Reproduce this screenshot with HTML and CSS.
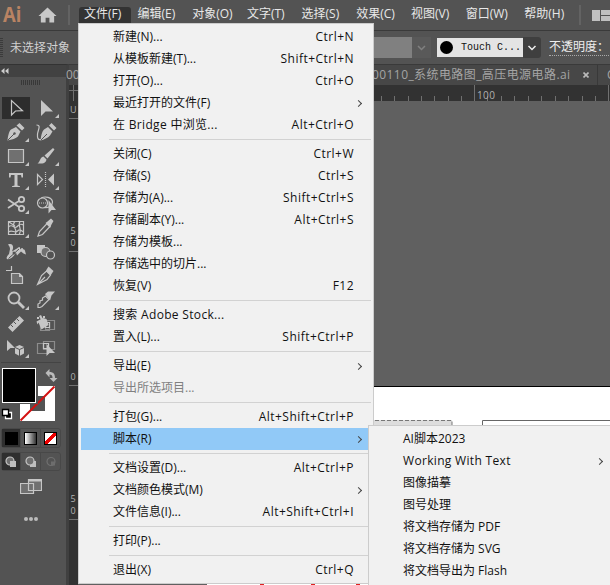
FILE: index.html
```html
<!DOCTYPE html>
<html lang="zh-CN">
<head>
<meta charset="utf-8">
<title>Ai</title>
<link rel="stylesheet" href="styles.css">
</head>
<body>
<div class="app">
  <header class="menubar">
    <span class="logo">Ai</span>
    <svg class="home" viewBox="0 0 20 18"><path d="M10 1 0.5 10H3v7h5v-5h4v5h5v-7h2.5z"/></svg>
    <i class="divider"></i>
    <nav class="menus">
      <span class="menu open">文件(F)</span><span class="menu">编辑(E)</span><span class="menu">对象(O)</span><span class="menu">文字(T)</span><span class="menu">选择(S)</span><span class="menu">效果(C)</span><span class="menu">视图(V)</span><span class="menu">窗口(W)</span><span class="menu last">帮助(H)</span>
    </nav>
    <i class="divider"></i>
    <svg class="workspace" viewBox="0 0 18 11"><path d="M0 0h8v11H0zM9 0h9v5H9zM9 6h9v5H9z"/></svg>
  </header>

  <div class="controls">
    <i class="grip"></i>
    <span class="status">未选择对象</span>
    <span class="field"></span>
    <svg class="drop" viewBox="0 0 19 19"><path d="M6 8l3.5 3.5L13 8"/></svg>
    <span class="brush"><i class="dot"></i>Touch C...</span>
    <svg class="drop live" viewBox="0 0 18 21"><path d="M5.500 9l3.500 3.500L12.500 9"/></svg>
    <span class="opacity">不透明度：</span>
  </div>

  <div class="work">
    <aside class="toolbar">
      <div class="collapse"><svg viewBox="0 0 8 6"><path d="M3.500 0v6L0 3zM7.500 0v6L4 3z"/></svg></div>
      <div class="handle"><i></i></div>
      <div class="tools">
        <svg class="tool active" viewBox="0 0 30 24"><path class="l" d="M10.500 4.500v14.500l4-4 7-.3z"/></svg>
        <svg class="tool" viewBox="0 0 30 24"><path d="M10 4v16l4.500-4.500H22zM28 18v4h-4z"/></svg>

        <svg class="tool" viewBox="0 0 30 24"><path d="M6.500 20.500C7 16 8 11 10 9.500l5-2.500 4.500 4.500-2.500 5c-2 2-6 3-10.500 4zM15.500 5.500l3-2.500 5 5L21 10.500z"/><path class="d" d="M7 20l6.500-6.500"/><circle class="dk" cx="13.500" cy="13.500" r="1.200"/><path d="M28 18v4h-4z"/></svg>
        <svg class="tool" viewBox="0 0 30 24"><path d="M9.500 20.500c.5-5 1.500-9 3.500-11l4-2.500 4.500 4.500-2.500 4c-2 2.500-6 4-9.500 5zM18 5.500l2.500-2.500 5 5-2.500 2.500z"/><path class="d" d="M10 20l6-6"/><path class="l" d="M5.500 5c5 0 1.500 5 1 9-.3 4 .5 6.500 3.500 5.500"/></svg>

        <svg class="tool" viewBox="0 0 30 24"><path class="l fill" d="M7.500 5.500h15v13h-15z"/><path d="M28 18v4h-4z"/></svg>
        <svg class="tool" viewBox="0 0 30 24"><path d="M22 4l1.500 1.500-7 9-3-3zM12.500 12.500l3 3c-1 5-6 4-9 4 3-2 2-6 6-7zM28 18v4h-4z"/></svg>

        <svg class="tool" viewBox="0 0 30 24"><path d="M8 5h14v4.500h-1.500L20 7h-3.500v10.500l2.500.7V19h-8v-.8l2.500-.7V7H10l-.5 2.500H8zM28 18v4h-4z"/></svg>
        <svg class="tool" viewBox="0 0 30 24"><path class="l" d="M6.500 6.500v10l5-5z"/><path d="M23 5.500v12L17 11.500zM28 18v4h-4z"/><path class="l dots" d="M14.500 4v16"/></svg>

        <svg class="tool" viewBox="0 0 30 24"><g class="l w"><circle cx="20.500" cy="7.500" r="2.700"/><circle cx="20.500" cy="16.500" r="2.700"/><path d="M7 7.500l11 7.500M7 16l11-7"/></g><path d="M28 18v4h-4z"/></svg>
        <svg class="tool" viewBox="0 0 30 24"><circle class="l" cx="11.500" cy="11" r="5"/><path class="l" d="M10 6c4-2 11-1 11.500 4 0 4-4 6-8 5.500"/><path class="l dots" d="M8 11h9"/><path d="M17.500 8v13.500l3-3.500H25z"/></svg>

        <svg class="tool" viewBox="0 0 30 24"><path class="l" d="M7.500 5.500h15v13h-15zM7.500 11c4-4 5 2 8 0s3-4 7-2M7.500 16c4-3 6 2 9-1 2-2 3-1 6 1M14 5.500c-5 4 4 8 0 13M19 5.500c-3 4 3 8-1 13M8 6l6 4"/><path d="M28 18v4h-4z"/></svg>
        <svg class="tool" viewBox="0 0 30 24"><path class="l" d="M7 20l1.500-4.500 7.500-8 3 3-7.500 8z"/><path d="M14.500 7l2-1.500 3.500-3 2.500 2.500-2 3.500L19 12z"/></svg>

        <svg class="tool" viewBox="0 0 30 24"><path d="M7 4.500c4-1.500 5.500 1 5 4l-1 3 4-2.500c2-1 3-3 4-1.500v2c3-3 3-1 3 0 2-1 2 2 3 5l-2.500-1-2.500-2-4 4-1-3c-2 4-6 7.500-9 6.500-1-1 0-3 2-5l1-5c0-2-1-3-2-4.500z"/><path class="d" d="M7.500 18.500L18 9"/><circle class="dk" cx="13" cy="13" r="1.500"/></svg>
        <svg class="tool" viewBox="0 0 30 24"><path d="M6 5h8v8H6z"/><circle class="l mid" cx="14.500" cy="12" r="4.500"/><circle class="l base" cx="19.500" cy="15" r="4"/></svg>

        <svg class="tool" viewBox="0 0 30 24"><path class="l" d="M5 6.500h5.500M10.500 2v5"/><path class="l fill" d="M10.500 9.500h8l3 3v7h-11z"/><path d="M18 9v4h4z"/></svg>
        <svg class="tool" viewBox="0 0 30 24"><path class="l" d="M6.500 20.500l4-9 5-4.500 4 4-3.500 4.500zM7 20l7-7"/><path d="M15 6.500l2.500-4 5 4.500-3 4.500z"/></svg>

        <svg class="tool" viewBox="0 0 30 24"><circle class="l w" cx="13" cy="10" r="5.500"/><path class="l w3" d="M17 14l6 6"/><path d="M28 18v4h-4z"/></svg>
        <svg class="tool" viewBox="0 0 30 24"><path class="l" d="M7 19.500v-3.500l2-1v-2l2.500-1v-2l3-2 3.500 3.500-7 7-2 1z"/><path d="M14 6l3-2.500h7l-3.500 4-1.500 5zM28 18v4h-4z"/></svg>

        <svg class="tool" viewBox="0 0 30 24"><path d="M18.500 4l4.500 4.500L11.500 20 7 15.500z"/><path class="d" d="M16 7l2 2M13 10l2 2M10 13l2 2"/></svg>
        <svg class="tool" viewBox="0 0 30 24"><g class="l dim"><path d="M9.500 10.500h9v8h-9zM14.500 8.500h9v9h-9z"/></g><path class="l" d="M14.500 10.500h4v5h-4z"/><path d="M5.500 9.500L12 6l3.500 1 2 6-7 4.500-3-7-1 2zM8 4l2-1 2 4-2 1z"/><path d="M6 5h2v2H6zM12 4h2v2h-2z"/></svg>

        <svg class="tool" viewBox="0 0 30 24"><path d="M6 4v11l3.500-3H14zM14 11l4.500-2 4.500 2v6.500L18.500 20 14 17.500zM28 18v4h-4z"/><path class="d" d="M14 11.500l4.500 2 4.500-2M18.500 13.500V20"/></svg>
        <svg class="tool" viewBox="0 0 30 24"><g class="l dim"><path d="M6.500 7.500h11v10h-11zM12.500 5.500h11v8h-11z"/></g><path class="l" d="M12.500 7.500h5v5h-5z"/><path d="M15.500 8v12l3-3H24z"/></svg>
      </div>
      <svg class="paint" viewBox="0 0 66 60">
        <path class="rule" d="M1 1.500h60"/>
        <path class="white" d="M20 25h35v35H20z"/><path class="base-fill" d="M30 35h15v15H30z"/>
        <path class="red" d="M20.500 59.500 54.500 25.500"/>
        <path class="base-fill" d="M1 6h37v37H1z"/><path class="white" d="M2 7h34v35H2z"/><path d="M3 8h32v33H3z"/>
        <path class="arrow" d="M45.500 12l4-4v3c4 0 5.500 2 5.500 6h2.500l-4 4-4-4h3c0-3-1-3.500-3-3.500v3z"/>
        <path class="mini" d="M5.500 51.500h6v6h-6z"/><path class="mini inv" d="M2.500 48.500h6v6h-6z"/>
      </svg>
      <div class="swatches">
        <span class="on"><i class="black"></i></span><span><i class="gradient"></i></span><span><i class="none"></i></span>
      </div>
      <div class="swatches modes">
        <span class="on"><svg viewBox="0 0 14 14"><circle class="l mid" cx="6" cy="6" r="4"/><path d="M6 6h6v6H6z"/></svg></span>
        <span><svg viewBox="0 0 14 14"><path d="M6 6h6v6H6z"/><circle class="l mid" cx="6" cy="6" r="4"/></svg></span>
        <span><svg class="off" viewBox="0 0 14 14"><circle class="l" cx="7" cy="6.500" r="4"/><path d="M7 6.500h4v4H7z"/></svg></span>
      </div>
      <svg class="screen" viewBox="0 0 22 16"><path class="l fill" d="M.5 4.500h13v10H.5zM8.500.5h13v11h-13z"/><path d="M8 0h14v2.500H8z"/></svg>
      <div class="more"><i></i><i></i><i></i></div>
    </aside>

    <main class="document">
      <div class="tabs"><span class="tab-start">00</span><span class="tab">00110_系统电路图_高压电源电路.ai</span><svg class="close" viewBox="0 0 6 6"><path d="M.5.5l5 5M5.500.5l-5 5"/></svg><i class="tab-gap"></i><span>C</span></div>
      <div class="ruler">
        <svg viewBox="0 0 541 16"><path d="M0 5.500h9M4.500 0v16M312.500 11v5M325.500 11v5M339.500 11v5M352.500 11v5M365.500 11v5M379.500 11v5M392.500 11v5M405.500 0v16M418.500 11v5M432.500 11v5M445.500 11v5M459.500 11v5M472.500 11v5M486.500 11v5M499.500 11v5M513.500 11v5M526.500 11v5M539.500 0v16"/><text x="408" y="14">100</text></svg>
      </div>
      <div class="stage">
        <svg class="vruler" viewBox="0 0 9 484"><path d="M0 17.500h9M0 150.500h9M0 284.500h9M0 418.500h9"/><text x="1" y="12">U</text><text x="1.500" y="133">5</text><text x="1.500" y="145">0</text><text x="1.500" y="279">0</text><text x="1.500" y="401">5</text><text x="1.500" y="413">0</text></svg>
        <svg class="canvas" viewBox="0 0 532 484"><path class="page" d="M129 285h403v199H129z"/><path class="edge" d="M129 285.500h403"/><path class="shape" d="M129 319h245v12H129z"/><path class="dash" d="M129 319.500h245v12"/><path class="outline" d="M404.500 331v-11.500H532"/><path class="mark" d="M182 483.500h4M233 483.500h4M278 483.500h4"/></svg>
      </div>
    </main>
  </div>
</div>

<div class="popup file-menu">
  <div class="item">新建(N)...<kbd>Ctrl+N</kbd></div>
  <div class="item">从模板新建(T)...<kbd>Shift+Ctrl+N</kbd></div>
  <div class="item">打开(O)...<kbd>Ctrl+O</kbd></div>
  <div class="item">最近打开的文件(F)<i class="chev"></i></div>
  <div class="item"><span class="latin">在 Bridge 中浏览...</span><kbd>Alt+Ctrl+O</kbd></div>
  <hr>
  <div class="item">关闭(C)<kbd>Ctrl+W</kbd></div>
  <div class="item">存储(S)<kbd>Ctrl+S</kbd></div>
  <div class="item">存储为(A)...<kbd>Shift+Ctrl+S</kbd></div>
  <div class="item">存储副本(Y)...<kbd>Alt+Ctrl+S</kbd></div>
  <div class="item">存储为模板...</div>
  <div class="item">存储选中的切片...</div>
  <div class="item">恢复(V)<kbd>F12</kbd></div>
  <hr>
  <div class="item"><span class="latin">搜索 Adobe Stock...</span></div>
  <div class="item">置入(L)...<kbd>Shift+Ctrl+P</kbd></div>
  <hr>
  <div class="item">导出(E)<i class="chev"></i></div>
  <div class="item disabled">导出所选项目...</div>
  <hr>
  <div class="item">打包(G)...<kbd>Alt+Shift+Ctrl+P</kbd></div>
  <div class="item selected">脚本(R)<i class="chev"></i></div>
  <hr>
  <div class="item">文档设置(D)...<kbd>Alt+Ctrl+P</kbd></div>
  <div class="item">文档颜色模式(M)<i class="chev"></i></div>
  <div class="item">文件信息(I)...<kbd>Alt+Shift+Ctrl+I</kbd></div>
  <hr>
  <div class="item">打印(P)...</div>
  <hr>
  <div class="item">退出(X)<kbd>Ctrl+Q</kbd></div>
</div>

<div class="popup sub-menu">
  <div class="item">AI脚本2023</div>
  <div class="item"><span class="latin">Working With Text</span><i class="chev"></i></div>
  <div class="item">图像描摹</div>
  <div class="item">图号处理</div>
  <div class="item">将文档存储为 PDF</div>
  <div class="item">将文档存储为 SVG</div>
  <div class="item">将文档导出为 Flash</div>
</div>
</body>
</html>
```
FILE: styles.css
```css
* { box-sizing: border-box; }

body {
  margin: 0;
  width: 610px;
  height: 585px;
  overflow: hidden;
  position: relative;
  background: #535353;
  font: 12px/22px "Open Sans", "Noto Sans CJK SC", sans-serif;
}

svg { display: block; flex: none; }
i { display: block; flex: none; }

/* Menu bar */
.menubar {
  display: flex;
  align-items: center;
  height: 31px;
  border-bottom: 1px solid #3a3a3a;
  color: #e8e8e8;
  white-space: nowrap;
}
.logo {
  width: 38px;
  padding-left: 3px;
  font: bold 22px/28px "Open Sans", sans-serif;
  color: #b98363;
  transform-origin: 3px 50%;
  transform: scaleX(.84) translateY(-2px);
}
.home { width: 19px; height: 18px; fill: #c8c8c8; }
.menubar .divider { width: 2px; height: 20px; margin-left: 11px; background: #636363; }
.menus { display: flex; margin-left: 9px; width: 494px; }
.menu { width: 54.700px; height: 16px; line-height: 14px; padding-left: 5px; }
.menu.open {
  width: 52px;
  margin-right: 1.500px;
  background: #333;
  border-radius: 3px 3px 0 0;
}
.menu.last { padding-left: 9px; }
.menubar .menus + .divider { margin-left: 6px; }
.workspace { width: 18px; height: 11px; margin-left: 11px; fill: #c0c0c0; }

/* Control bar */
.controls {
  display: flex;
  align-items: center;
  height: 33px;
  color: #d0d0d0;
  white-space: nowrap;
}
.grip { width: 3px; height: 19px; background: repeating-linear-gradient(#3b3b3b 0 1px, #535353 1px 2px); }
.status { width: 370px; padding-left: 7px; line-height: 30px; }
.field { width: 39px; height: 21px; background: #808080; }
.drop { width: 19px; height: 21px; background: #595959; fill: none; stroke: #808080; stroke-width: 1.500; }
.drop.live { width: 18px; background: #3f3f3f; stroke: #eee; border-radius: 0 3px 3px 0; }
.brush {
  display: flex;
  align-items: center;
  gap: 8px;
  width: 86px;
  height: 19px;
  margin-left: 6px;
  padding-left: 3px;
  background: #e4e4e4;
  color: #111;
  font: 10px/18px "Liberation Mono", monospace;
}
.dot { width: 13px; height: 13px; border-radius: 50%; background: #000; }
.opacity { margin-left: 8px; height: 17px; line-height: 15px; border-bottom: 1px dotted #aaa; color: #eee; }

/* Workspace */
.work { display: flex; height: 521px; }

.toolbar {
  display: flex;
  flex-direction: column;
  flex: none;
  width: 69px;
  border-right: 3px solid #404040;
  border-top: 1px solid #333;
}
.collapse { height: 12px; padding: 3px 0 0 1px; background: #424242; }
.collapse svg { width: 8px; height: 6px; fill: #ccc; }
.handle { height: 19px; padding: 3px 0 0 21px; }
.handle i { width: 19px; height: 5px; background: repeating-linear-gradient(90deg, #383838 0 1px, #535353 1px 2px); }

.tools { display: grid; grid-template-columns: 30px 30px; margin-left: 1px; }
.tool { width: 30px; height: 24px; fill: #c6c6c6; }
.tool.active { background: linear-gradient(#2d2d2d, #2d2d2d) 1px 1px / 28px 22px no-repeat; }
.l { fill: none; stroke: #c6c6c6; stroke-width: 1.200; }
.l.fill, .l.mid { fill: #707070; }
.l.base { fill: #535353; }
.l.w { stroke-width: 1.800; }
.l.w3 { stroke-width: 2.800; }
.l.dots { stroke-dasharray: 1 1; }
.l.dim { stroke: #8c8c8c; }
.d { fill: none; stroke: #535353; }
.dk { fill: #535353; }

.paint { width: 66px; height: 60px; margin-top: 1px; }
.rule { stroke: #444; }
.white { fill: #fff; }
.base-fill { fill: #535353; }
.red { stroke: #d41111; stroke-width: 2; }
.arrow { fill: #bbb; }
.mini { fill: #000; stroke: #fff; stroke-width: 1.300; }
.mini.inv { fill: #fff; stroke: #000; }

.swatches {
  display: grid;
  grid-template-columns: 19px 20px 19px;
  width: 60px;
  height: 20px;
  margin: 7px 0 0 1px;
  border: 1px solid #484848;
  border-radius: 3px;
}
.swatches span { display: flex; align-items: center; justify-content: center; border-right: 1px solid #484848; }
.swatches span:last-child { border-right: 0; }
.swatches .on { background: #2f2f2f; }
.swatches i { width: 13px; height: 13px; border: 1px solid #000; }
.black { background: #000; }
.gradient { background: linear-gradient(90deg, #fff, #333); }
.none { background: linear-gradient(135deg, #fff 0 39%, #e00 39% 61%, #fff 61%); }
.modes { margin-top: 4px; height: 19px; }
.modes svg { width: 14px; height: 14px; fill: #bdbdbd; }
.modes .off { opacity: .25; }
.screen { width: 22px; height: 16px; margin: 8px 0 0 20px; fill: #c6c6c6; }
.more { display: flex; gap: 1px; margin: 22px 0 0 24px; }
.more i { width: 4px; height: 4px; border-radius: 50%; background: #bbb; }

/* Document window */
.document { flex: none; width: 541px; }
.tabs {
  display: flex;
  align-items: center;
  height: 21px;
  border-top: 1px solid #3a3a3a;
  background: #474747;
  color: #a4a4a4;
  white-space: nowrap;
}
.tab-start { flex: none; width: 304px; letter-spacing: 0; margin-left: -3px; }
.tab { flex: none; width: 209px; margin-left: 2px; padding-bottom: 1px; letter-spacing: .42px; }
.close { width: 6px; height: 6px; margin-left: 2px; stroke: #bbb; stroke-width: 1.600; }
.tab-gap { width: 1px; height: 20px; margin: 0 9px 0 8px; background: #393939; }
.ruler { height: 15px; background: #323232; }
.ruler svg { width: 541px; height: 16px; }
.ruler path, .vruler path { stroke: #707070; }
.ruler text, .vruler text { font: 10px "Open Sans", sans-serif; fill: #b0b0b0; }
.ruler text { letter-spacing: .4px; }
.ruler { height: 16px; }
.stage { display: flex; height: 484px; }
.vruler { width: 9px; height: 484px; background: #323232; }
.vruler text { font-size: 9px; }
.canvas { width: 532px; height: 484px; background: #606060; }
.page { fill: #fff; }
.edge { stroke: #000; }
.shape { fill: #ddd; }
.dash { fill: none; stroke: #777; stroke-dasharray: 4 2; }
.outline { fill: none; stroke: #666; }
.mark { stroke: #d22; }

/* Popup menus */
.popup { position: absolute; background: #f1f1f1; border: 1px solid #ccc; color: #111; }
.file-menu { left: 78px; top: 23px; width: 296px; height: 561px; padding: 2px; }
.sub-menu { left: 368px; top: 425px; width: 250px; height: 170px; padding: 2px; }
.item {
  display: flex;
  align-items: center;
  height: 22px;
  padding: 0 7px 0 32px;
  white-space: nowrap;
}
.item kbd { margin-left: auto; padding-right: 10px; font: inherit; letter-spacing: .47px; }
.latin { letter-spacing: .32px; }
.chev {
  width: 5px;
  height: 5px;
  margin: 0 3px 0 auto;
  border: solid #444;
  border-width: 1px 1px 0 0;
  transform: rotate(45deg);
}
.sub-menu .chev { margin-right: 6px; }
.selected { background: #91c9f7; }
.disabled { color: #808080; }
.popup hr { height: 1px; margin: 3px 0 3px 28px; border: 0; background: #d2d2d2; }
```
